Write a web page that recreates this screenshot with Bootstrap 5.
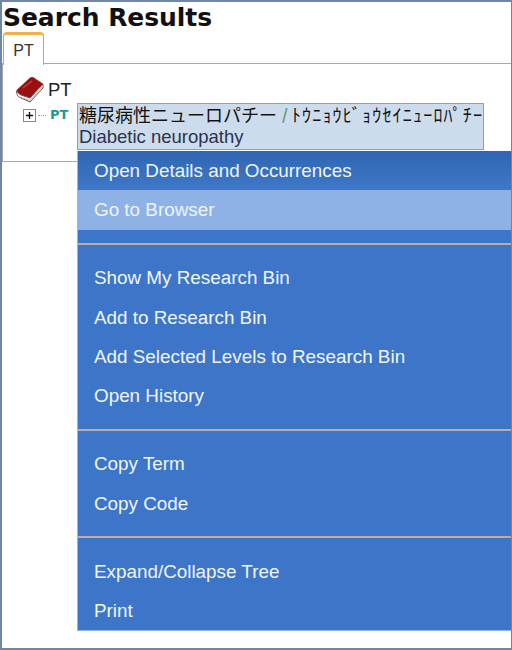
<!DOCTYPE html>
<html lang="en"><head><meta charset="utf-8">
<link href="https://cdn.jsdelivr.net/npm/bootstrap@5.3.0/dist/css/bootstrap.min.css" rel="stylesheet">
<style>
html,body{margin:0;height:650px;overflow:hidden;background:#fff}
.shot{position:relative;width:512px;height:650px;border:2px solid #6d87a6;border-right-width:1px;border-bottom-width:2px;font-family:"Liberation Sans",Arial,sans-serif;overflow:hidden}
.title{font:700 25px/26px "DejaVu Sans",Verdana,sans-serif;color:#111;margin:3px 0 0 1px;height:26px;letter-spacing:-.05px}
.tabbar{height:33px;border-bottom:1px solid #a9a9a9;display:flex}
.tabitem{width:41px;height:33px;margin-left:1px;background:#fff;border:1px solid #a9a9a9;border-bottom:0;border-top:3px solid #f0b050;border-radius:4px 4px 0 0;font-size:16px;line-height:31px;text-align:center;color:#333;position:relative;top:1px}
.treepane{height:98px;border-left:1px solid #a9a9a9;border-bottom:1px solid #a9a9a9;width:75px;padding:13px 0 0 13px}
.rootrow{gap:2px;font-size:18.5px;line-height:26px;color:#222}
.childrow{gap:2px;margin:2px 0 0 7px;height:20px}
.plus{width:13px;height:13px}
.dots{width:8px;border-top:1px dotted #999}
.ptcode{font:700 13px/16px "DejaVu Sans",sans-serif;color:#1e9a8c;margin-left:2px}
.selbox{position:absolute;left:75px;top:101px;width:407px;height:47px;background:#cddcec;border:1px solid #7ea3cc;padding:0 0 0 1px;color:#222;line-height:20px;white-space:nowrap}
.jp{font-family:"Noto Sans CJK JP",sans-serif;font-size:18px;line-height:20px;height:20px;color:#111;display:flex}
.slash{color:#5a9a70;font-weight:700;font-size:15px;margin:0 4px 0 5px}
.kana{font-size:18px;letter-spacing:1.2px}
.en{display:block;font-size:18.5px;margin-top:3px;color:#2a3350}
.ctx{position:absolute;left:75px;top:149px;right:0;height:480px;background:#3d76c9;border-left:1px solid #8fb7ee;border-bottom:1px solid #8fb7ee;box-shadow:inset 0 2px 0 #2e63ad;color:#f0f5fc;font-size:18.85px}
.ctxitem{height:39.4px;line-height:39.6px;padding-left:16px;white-space:nowrap}
.ctxitem.on{background:linear-gradient(#2f66b3,#3f78c8)}
.ctxitem.hov{background:#8fb2e6;color:#eef3fb}
.ctxsep{height:28.5px;display:flex;align-items:center}
.ctxsep::after{content:"";display:block;width:100%;height:2px;background:#bfae9f}
</style></head>
<body>
<div class="shot">
  <div class="title">Search Results</div>
  <div class="tabbar"><div class="tabitem">PT</div></div>
  <div class="treepane">
    <div class="d-flex align-items-center rootrow">
      <svg width="30" height="26" viewBox="0 0 30 26"><path d="M1 13 L14 1 C15 0 17 0 18 1 L27 7 L14 21 L4 18 C1 17 0 15 1 13Z" fill="#9c0f0f" stroke="#7a1010" stroke-width=".6"/><path d="M1 14 C0 17 2 20 5 21 L14 25 L27 11 L27 7 L14 21 L5 18 C3 17 2 16 1 14Z" fill="#fff" stroke="#7a4a4a" stroke-width="1"/><path d="M4 20 L14 23.5 L26 10" fill="none" stroke="#b8a0a0" stroke-width=".8"/><path d="M7 11 L16 4" stroke="#c84040" stroke-width="1.2"/></svg>
      <span>PT</span>
    </div>
    <div class="d-flex align-items-center childrow">
      <svg class="plus" viewBox="0 0 13 13"><rect x=".5" y=".5" width="12" height="12" fill="#fff" stroke="#888"/><path d="M3 6.5H10M6.5 3V10" stroke="#111" stroke-width="1.4"/></svg>
      <span class="dots"></span><span class="ptcode">PT</span>
    </div>
  </div>
  <div class="selbox">
    <span class="jp"><span>糖尿病性ニューロパチー</span><span class="slash">/</span><span class="kana">ﾄｳﾆｮｳﾋﾞｮｳｾｲﾆｭｰﾛﾊﾟﾁｰ</span></span>
    <span class="en">Diabetic neuropathy</span>
  </div>
  <div class="ctx">
    <div class="ctxitem on">Open Details and Occurrences</div>
    <div class="ctxitem hov">Go to Browser</div>
    <div class="ctxsep"></div>
    <div class="ctxitem">Show My Research Bin</div>
    <div class="ctxitem">Add to Research Bin</div>
    <div class="ctxitem">Add Selected Levels to Research Bin</div>
    <div class="ctxitem">Open History</div>
    <div class="ctxsep"></div>
    <div class="ctxitem">Copy Term</div>
    <div class="ctxitem">Copy Code</div>
    <div class="ctxsep"></div>
    <div class="ctxitem">Expand/Collapse Tree</div>
    <div class="ctxitem">Print</div>
  </div>
</div>
<script src="https://cdn.jsdelivr.net/npm/bootstrap@5.3.0/dist/js/bootstrap.bundle.min.js"></script>
</body></html>
